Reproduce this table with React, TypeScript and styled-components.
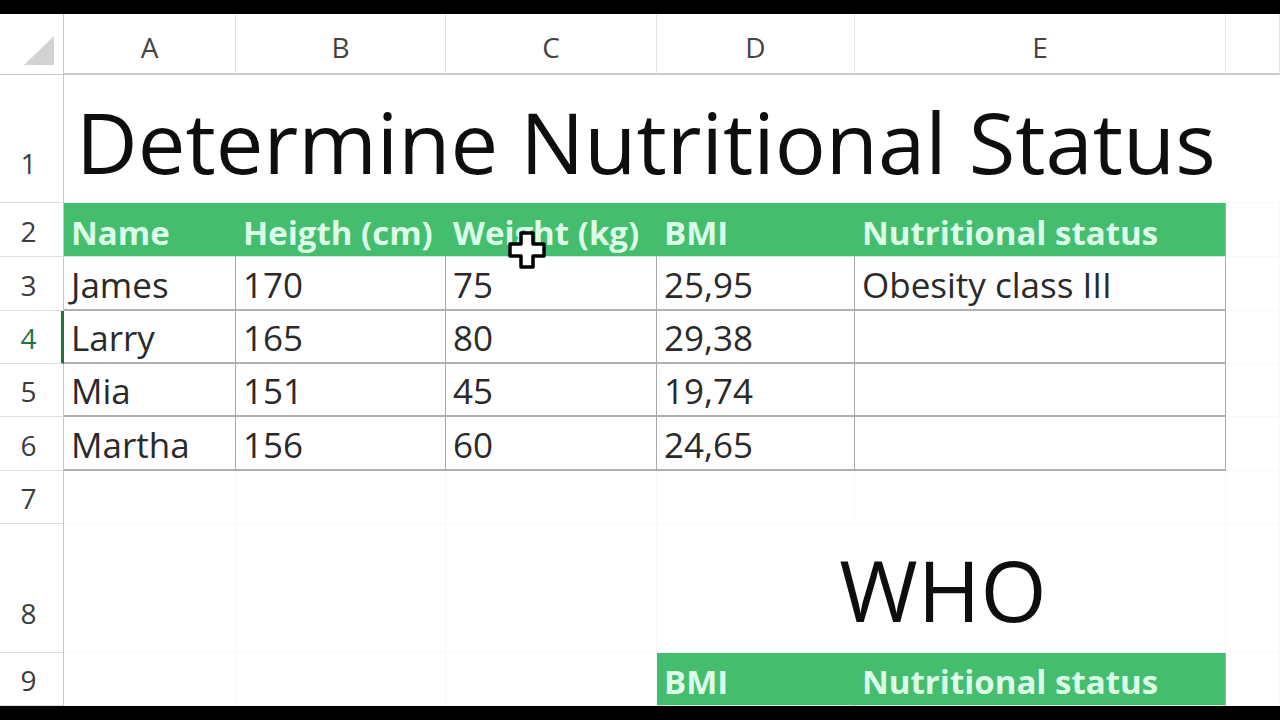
import React from "react";
import styled, { createGlobalStyle, css } from "styled-components";

const Global = createGlobalStyle`
  html, body { margin: 0; padding: 0; background: #000; }
  body { width: 1280px; height: 720px; overflow: hidden; font-family: "Open Sans", "Liberation Sans", sans-serif; }
`;

const Frame = styled.div`
  width: 1280px;
  height: 720px;
  background: #000;
  padding: 14px 0;
  box-sizing: border-box;
`;

const Sheet = styled.div`
  position: relative;
  height: 692px;
  overflow: hidden;
  background: #fff;
  display: grid;
  grid-template-columns: 64px 172px 210px 211px 198px 371px 1fr;
  grid-template-rows: 61px 128px 54px 54px 53px 53px 54px 53px 129px 53px;
  font-family: "Open Sans", "Liberation Sans", sans-serif;
`;

const Corner = styled.div`
  box-sizing: border-box;
  border-right: 1px solid #c9c9c9;
  border-bottom: 1px solid #c6c6c6;
  display: flex;
  align-items: flex-end;
  justify-content: flex-end;
  padding: 0 9px 9px 0;
`;

const ColHeader = styled.div`
  box-sizing: border-box;
  border-right: 1px solid #e2e2e2;
  border-bottom: 2px solid #cbcbcb;
  display: flex;
  align-items: flex-end;
  justify-content: center;
  padding-bottom: 12px;
  font-size: 28px;
  line-height: 1;
  color: #444;
`;

const RowHeader = styled.div<{ $tall?: boolean; $selected?: boolean }>`
  box-sizing: border-box;
  border-right: 1px solid #c6c6c6;
  border-bottom: 1px solid #dedede;
  display: flex;
  align-items: flex-end;
  justify-content: center;
  padding-bottom: ${(p) => (p.$tall ? "25px" : "11px")};
  padding-right: 6px;
  font-size: 28px;
  line-height: 1;
  color: #3c3c3c;
  ${(p) =>
    p.$selected &&
    css`
      border-right: 3px solid #217346;
      color: #217346;
      padding-right: 4px;
    `}
`;

type Variant = "plain" | "table" | "head";

const Cell = styled.div<{ $variant: Variant; $last?: boolean }>`
  box-sizing: border-box;
  display: flex;
  align-items: flex-end;
  padding: 0 0 7px 7px;
  line-height: 1;
  white-space: nowrap;
  ${(p) =>
    p.$variant === "plain" &&
    css`
      border-right: 1px solid #f8f8f8;
      border-bottom: 1px solid #f8f8f8;
    `}
  ${(p) =>
    p.$variant === "table" &&
    css`
      border-right: 1px solid #a8a8a8;
      border-bottom: 2px solid #b0b0b0;
      font-size: 35px;
      color: #2a2a2a;
    `}
  ${(p) =>
    p.$variant === "head" &&
    css`
      background: #44bd6f;
      border-right: 1px solid ${p.$last ? "#a8a8a8" : "#44bd6f"};
      border-bottom: 1px solid #cfe9d8;
      font-size: 33px;
      font-weight: 700;
      color: #dcffe8;
    `}
`;

const Title = styled.div`
  grid-column: 2 / -1;
  box-sizing: border-box;
  display: flex;
  align-items: flex-end;
  padding: 0 0 18px 12px;
  font-size: 85px;
  line-height: 1;
  color: #0e0e0e;
  white-space: nowrap;
  border-bottom: 1px solid #f8f8f8;
`;

const Who = styled.div`
  grid-column: 5 / 7;
  box-sizing: border-box;
  display: flex;
  align-items: flex-end;
  justify-content: center;
  padding: 0 0 20px 4px;
  font-size: 85px;
  line-height: 1;
  color: #0e0e0e;
  border-right: 1px solid #f8f8f8;
  border-bottom: 1px solid #f8f8f8;
`;

const Cursor = styled.svg`
  position: absolute;
  left: 507px;
  top: 216px;
  width: 40px;
  height: 40px;
  pointer-events: none;
`;

const columns = ["A", "B", "C", "D", "E", ""];

const headRow = ["Name", "Heigth (cm)", "Weight (kg)", "BMI", "Nutritional status"];

const data = [
  { n: 3, cells: ["James", "170", "75", "25,95", "Obesity class III"] },
  { n: 4, cells: ["Larry", "165", "80", "29,38", ""], selected: true },
  { n: 5, cells: ["Mia", "151", "45", "19,74", ""] },
  { n: 6, cells: ["Martha", "156", "60", "24,65", ""] },
];

export default function App() {
  return (
    <Frame>
      <Global />
      <Sheet>
        <Corner>
          <svg width="30" height="29" viewBox="0 0 30 29">
            <polygon points="0,29 30,29 30,0" fill="#d2d2d2" />
          </svg>
        </Corner>
        {columns.map((c, i) => (
          <ColHeader key={i}>{c}</ColHeader>
        ))}

        <RowHeader $tall>1</RowHeader>
        <Title>Determine Nutritional Status</Title>

        <RowHeader>2</RowHeader>
        {headRow.map((h, i) => (
          <Cell key={i} $variant="head" $last={i === headRow.length - 1}>
            {h}
          </Cell>
        ))}
        <Cell $variant="plain" />

        {data.map((r) => (
          <React.Fragment key={r.n}>
            <RowHeader $selected={r.selected}>{r.n}</RowHeader>
            {r.cells.map((c, i) => (
              <Cell key={i} $variant="table">
                {c}
              </Cell>
            ))}
            <Cell $variant="plain" />
          </React.Fragment>
        ))}

        <RowHeader>7</RowHeader>
        {columns.map((_, i) => (
          <Cell key={i} $variant="plain" />
        ))}

        <RowHeader $tall>8</RowHeader>
        <Cell $variant="plain" />
        <Cell $variant="plain" />
        <Cell $variant="plain" />
        <Who>WHO</Who>
        <Cell $variant="plain" />

        <RowHeader>9</RowHeader>
        <Cell $variant="plain" />
        <Cell $variant="plain" />
        <Cell $variant="plain" />
        <Cell $variant="head">BMI</Cell>
        <Cell $variant="head" $last>
          Nutritional status
        </Cell>
        <Cell $variant="plain" />

        <Cursor viewBox="0 0 40 40">
          <path
            d="M14 3 H26 V14 H37 V26 H26 V37 H14 V26 H3 V14 H14 Z"
            fill="#fff"
            stroke="#000"
            strokeWidth="3.5"
            strokeLinejoin="round"
          />
        </Cursor>
      </Sheet>
    </Frame>
  );
}
